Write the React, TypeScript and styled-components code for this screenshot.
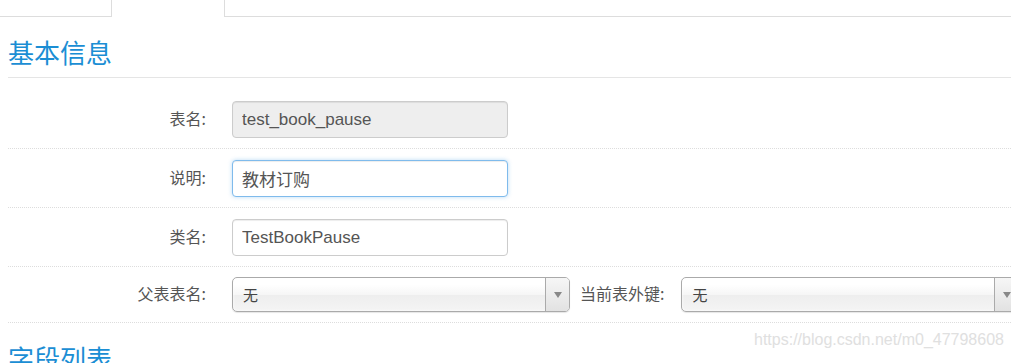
import React from 'react';
import styled, { createGlobalStyle } from 'styled-components';

const GlobalStyle = createGlobalStyle`
  html, body {
    margin: 0;
    padding: 0;
    background: #fff;
    overflow: hidden;
  }
  body {
    font-family: "Liberation Sans", "Noto Sans CJK SC", sans-serif;
    color: #555;
  }
`;

const Page = styled.div`
  position: relative;
  width: 1011px;
  height: 363px;
  overflow: hidden;
`;

const TabBar = styled.ul`
  display: flex;
  margin: 0;
  padding: 0;
  list-style: none;
  height: 16px;
  border-bottom: 1px solid #ddd;
`;

const Tab = styled.li<{ $active?: boolean }>`
  box-sizing: border-box;
  width: ${(p) => (p.$active ? '114px' : '111px')};
  height: ${(p) => (p.$active ? '17px' : '16px')};
  background: #fff;
  border-left: ${(p) => (p.$active ? '1px solid #ddd' : 'none')};
  border-right: ${(p) => (p.$active ? '1px solid #ddd' : 'none')};
`;

const Content = styled.div`
  padding: 0 0 0 8px;
`;

const SectionTitle = styled.h3`
  margin: 19px 0 0;
  padding: 0 0 10px;
  font-family: "Noto Sans CJK SC", sans-serif;
  font-size: 26px;
  line-height: 31px;
  font-weight: normal;
  color: #1b8ed4;
  border-bottom: 1px solid #e5e5e5;
`;

const Form = styled.div`
  margin-top: 12px;
`;

const Row = styled.div<{ $pad?: number }>`
  display: flex;
  align-items: center;
  padding: ${(p) => p.$pad ?? 11}px 0 10px;
  border-bottom: 1px dotted #ddd;
`;

const Label = styled.label`
  width: 198px;
  margin-right: 2px;
  margin-bottom: 3px;
  text-align: right;
  font-family: "Noto Sans CJK SC", sans-serif;
  font-size: 16px;
  line-height: 22px;
  color: #555;
  flex-shrink: 0;
`;

const InlineLabel = styled(Label)`
  width: auto;
  margin: 0 17px 3px 10px;
`;

const Input = styled.input<{ $focus?: boolean }>`
  box-sizing: border-box;
  width: 276px;
  height: 37px;
  margin-left: 24px;
  padding: 0 9px;
  font-family: "Liberation Sans", "Noto Sans CJK SC", sans-serif;
  font-size: 17px;
  color: #555;
  background: ${(p) => (p.readOnly ? '#eee' : '#fff')};
  border: 1px solid ${(p) => (p.$focus ? '#7fbbec' : '#ccc')};
  border-radius: 4px;
  outline: none;
  box-shadow: ${(p) =>
    p.$focus
      ? 'inset 0 1px 1px rgba(0,0,0,.075), 0 0 4px rgba(102,175,233,.45)'
      : 'inset 0 1px 1px rgba(0,0,0,.075)'};
`;

const Select = styled.div<{ $first?: boolean }>`
  box-sizing: border-box;
  display: flex;
  align-items: stretch;
  width: 338px;
  height: 35px;
  margin-left: ${(p) => (p.$first ? '24px' : '0')};
  flex-shrink: 0;
  border: 1px solid #aaa;
  border-radius: 5px;
  background: linear-gradient(#fff 20%, #f6f6f6 50%, #eee 52%, #f4f4f4 100%);
  box-shadow: inset 0 0 3px #fff, 0 1px 1px rgba(0, 0, 0, 0.1);
  overflow: hidden;
`;

const SelectValue = styled.span`
  flex: 1;
  display: flex;
  align-items: center;
  padding-left: 10px;
  font-family: "Noto Sans CJK SC", sans-serif;
  font-size: 15px;
  color: #444;
`;

const SelectArrow = styled.span`
  width: 23px;
  display: flex;
  align-items: center;
  justify-content: center;
  border-left: 1px solid #aaa;
  background: linear-gradient(#f6f6f6, #e2e2e2);
  &::after {
    content: '';
    border-left: 4px solid transparent;
    border-right: 4px solid transparent;
    border-top: 6px solid #888;
  }
`;

const Watermark = styled.div`
  position: absolute;
  left: 754px;
  top: 331px;
  font-family: "Liberation Sans", sans-serif;
  font-size: 16px;
  color: #e0e0e0;
  white-space: nowrap;
`;

function App() {
  return (
    <Page>
      <GlobalStyle />
      <TabBar>
        <Tab />
        <Tab $active />
      </TabBar>
      <Content>
        <SectionTitle>基本信息</SectionTitle>
        <Form>
          <Row>
            <Label>表名:</Label>
            <Input readOnly value="test_book_pause" />
          </Row>
          <Row>
            <Label>说明:</Label>
            <Input $focus defaultValue="教材订购" />
          </Row>
          <Row>
            <Label>类名:</Label>
            <Input defaultValue="TestBookPause" />
          </Row>
          <Row $pad={10}>
            <Label>父表表名:</Label>
            <Select $first>
              <SelectValue>无</SelectValue>
              <SelectArrow />
            </Select>
            <InlineLabel>当前表外键:</InlineLabel>
            <Select>
              <SelectValue>无</SelectValue>
              <SelectArrow />
            </Select>
          </Row>
        </Form>
        <SectionTitle>字段列表</SectionTitle>
      </Content>
      <Watermark>https://blog.csdn.net/m0_47798608</Watermark>
    </Page>
  );
}

export default App;
